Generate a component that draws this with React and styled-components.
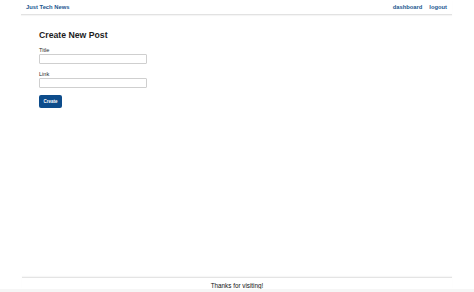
import React from "react";
import styled, { createGlobalStyle } from "styled-components";

const GlobalStyle = createGlobalStyle`
  html, body {
    margin: 0;
    padding: 0;
    background: #fff;
    font-family: "Liberation Sans", Arial, sans-serif;
  }
`;

const Page = styled.div`
  display: flex;
  flex-direction: column;
  height: 292px;
  width: 474px;
`;

const Header = styled.header`
  margin: 0 22px 0 21px;
  height: 14px;
  padding: 0 4px 0 5px;
  display: flex;
  justify-content: space-between;
  align-items: center;
  border-bottom: 1px solid #e2e2e2;
  box-shadow: 0 1px 1px rgba(0, 0, 0, 0.04);
`;

const NavLink = styled.a`
  font-size: 5.8px;
  font-weight: bold;
  color: #21578f;
  text-decoration: none;
  margin-left: ${(p) => p.gap || "0"};
  &:visited {
    color: #21578f;
  }
`;

const Nav = styled.nav`
  display: flex;
  padding-right: 1px;
`;

const Main = styled.main`
  flex: 1;
  padding: 15px 0 0 39px;
`;

const Heading = styled.h2`
  margin: 0 0 7px;
  font-size: 8.7px;
  line-height: 10px;
  font-weight: bold;
  color: #1c1c1c;
`;

const Label = styled.label`
  display: block;
  font-size: 5.6px;
  color: #2a2a2a;
  line-height: 7px;
`;

const Field = styled.div`
  margin-bottom: 7px;
`;

const Input = styled.input`
  display: block;
  box-sizing: border-box;
  width: 108px;
  height: 10px;
  border: 1px solid #cfcfcf;
  border-radius: 1px;
  padding: 0;
  margin: 0;
`;

const Button = styled.button`
  display: block;
  margin-top: 2px;
  width: 23px;
  height: 13px;
  border: none;
  border-radius: 2px;
  background: #0d4c8b;
  color: #fff;
  font-size: 4.5px;
  font-weight: bold;
  font-family: "Liberation Sans", Arial, sans-serif;
  padding: 0;
`;

const Footer = styled.footer`
  margin: 0 22px;
  border-top: 1px solid #e4e4e4;
  box-shadow: 0 -1px 1px rgba(0, 0, 0, 0.03);
  height: 11px;
  display: flex;
  justify-content: center;
  align-items: flex-end;
  font-size: 6.3px;
  line-height: 7px;
  color: #111;
`;

const BottomBar = styled.div`
  height: 3px;
  background: #f6f6f6;
`;

export default function App() {
  return (
    <Page>
      <GlobalStyle />
      <Header>
        <NavLink href="#">Just Tech News</NavLink>
        <Nav>
          <NavLink href="#">dashboard</NavLink>
          <NavLink href="#" gap="7px">logout</NavLink>
        </Nav>
      </Header>
      <Main>
        <Heading>Create New Post</Heading>
        <Field>
          <Label>Title</Label>
          <Input type="text" />
        </Field>
        <Field>
          <Label>Link</Label>
          <Input type="text" />
        </Field>
        <Button>Create</Button>
      </Main>
      <Footer>Thanks for visiting!</Footer>
      <BottomBar />
    </Page>
  );
}
